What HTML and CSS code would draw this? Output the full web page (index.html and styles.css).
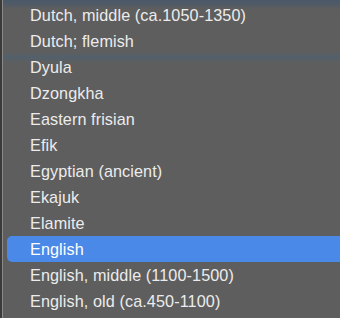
FILE: index.html
```html
<!DOCTYPE html>
<html>
<head>
<meta charset="utf-8">
<link rel="stylesheet" href="styles.css">
</head>
<body>
<div class="menu">
  <ul class="list">
    <li class="item">Dutch, middle (ca.1050-1350)</li>
    <li class="item">Dutch; flemish</li>
    <li class="item">Dyula</li>
    <li class="item">Dzongkha</li>
    <li class="item">Eastern frisian</li>
    <li class="item">Efik</li>
    <li class="item">Egyptian (ancient)</li>
    <li class="item">Ekajuk</li>
    <li class="item">Elamite</li>
    <li class="item selected">English</li>
    <li class="item">English, middle (1100-1500)</li>
    <li class="item">English, old (ca.450-1100)</li>
  </ul>
</div>
</body>
</html>
```
FILE: styles.css
```css
html, body {
  margin: 0;
  padding: 0;
  width: 340px;
  height: 318px;
  overflow: hidden;
  background: #5e5e5e;
}
.menu {
  height: 318px;
  border-left: 2px solid #3a3a3a;
  box-shadow: inset 1px 0 0 #8a8a8a;
  background:
    linear-gradient(to bottom, #4a5868 0px, #4f5a66 4px, rgba(94,94,94,0) 9px),
    linear-gradient(to bottom, rgba(94,94,94,0) 52px, #52606c 57px, rgba(94,94,94,0) 63px),
    #5e5e5e;
  font-family: "Liberation Sans", Arial, sans-serif;
  font-size: 16.2px;
  color: #ececec;
}
.list {
  list-style: none;
  margin: 0;
  padding: 2px 0 0 5px;
}
.item {
  height: 26px;
  line-height: 26px;
  padding-left: 23px;
  border-radius: 5px 0 0 5px;
  white-space: nowrap;
  letter-spacing: 0.1px;
}
.selected {
  background: #4a89e8;
  color: #ffffff;
}
```
